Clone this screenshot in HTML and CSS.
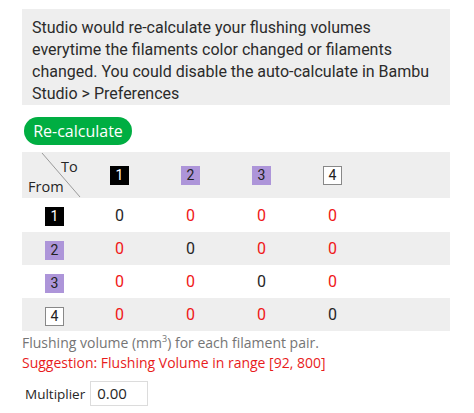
FILE: index.html
```html
<!DOCTYPE html>
<html>
<head>
<meta charset="utf-8">
<link rel="stylesheet" href="styles.css">
</head>
<body>
<div class="page">
  <div class="notice">Studio would re-calculate your flushing volumes everytime the filaments color changed or filaments changed. You could disable the auto-calculate in Bambu Studio &gt; Preferences</div>
  <div class="btn">Re-calculate</div>
  <div class="table">
    <div class="row head">
      <div class="corner">
        <svg class="diag" width="62" height="46" viewBox="0 0 62 46"><line x1="20" y1="1" x2="58" y2="45" stroke="#9a9a9a" stroke-width="1"/></svg>
        <span class="to">To</span>
        <span class="from">From</span>
      </div>
      <div class="cell"><span class="badge black">1</span></div>
      <div class="cell"><span class="badge purple">2</span></div>
      <div class="cell"><span class="badge purple">3</span></div>
      <div class="cell"><span class="badge white">4</span></div>
    </div>
    <div class="row">
      <div class="rowhead"><span class="badge black">1</span></div>
      <div class="cell">0</div><div class="cell red">0</div><div class="cell red">0</div><div class="cell red">0</div>
    </div>
    <div class="row grey">
      <div class="rowhead"><span class="badge purple">2</span></div>
      <div class="cell red">0</div><div class="cell">0</div><div class="cell red">0</div><div class="cell red">0</div>
    </div>
    <div class="row">
      <div class="rowhead"><span class="badge purple">3</span></div>
      <div class="cell red">0</div><div class="cell red">0</div><div class="cell">0</div><div class="cell red">0</div>
    </div>
    <div class="row grey">
      <div class="rowhead"><span class="badge white">4</span></div>
      <div class="cell red">0</div><div class="cell red">0</div><div class="cell red">0</div><div class="cell">0</div>
    </div>
  </div>
  <div class="info">Flushing volume (mm<sup>3</sup>) for each filament pair.</div>
  <div class="suggest">Suggestion: Flushing Volume in range [92, 800]</div>
  <div class="mult">
    <span>Multiplier</span>
    <div class="input">0.00</div>
  </div>
  <div class="hint">The multiplier should be in range [0.50, 2.50].</div>
</div>
</body>
</html>
```
FILE: styles.css
```css
html, body { margin: 0; padding: 0; background: #fff; overflow: hidden; }
body { width: 474px; height: 413px; }
.page { padding: 9px 24px 0 22px; font-family: "Open Sans", "Noto Sans", sans-serif; color: #262626; }
.notice {
  background: #eeeeee;
  padding: 8px 10px 0 10px;
  height: 88px;
  font-family: Roboto, "Noto Sans", sans-serif;
  font-size: 16px;
  line-height: 22px;
  color: #2b2b2b;
}
.btn {
  margin-top: 12px;
  margin-left: 2px;
  width: 108px;
  height: 28px;
  border-radius: 14px;
  background: #00ae42;
  color: #fff;
  font-size: 16px;
  line-height: 28px;
  text-align: center;
}
.table { margin-top: 7px; }
.row {
  display: grid;
  grid-template-columns: 62px 71px 71px 71px 71px 1fr;
  height: 33px;
  align-items: center;
}
.row.head { height: 46px; background: #eeeeee; }
.row.grey { background: #eeeeee; }
.row:nth-child(2) { height: 34px; }
.corner { position: relative; height: 46px; }
.diag { position: absolute; left: 0; top: 0; }
.to { position: absolute; left: 39px; top: 5px; font-size: 14.5px; }
.from { position: absolute; left: 6px; top: 25px; font-size: 14.5px; }
.cell { text-align: center; font-size: 16px; font-family: Roboto, "Noto Sans", sans-serif; }
.rowhead { text-align: center; padding-left: 3px; }
.red { color: #f01818; }
.badge {
  display: inline-block;
  width: 19px;
  height: 19px;
  line-height: 19px;
  text-align: center;
  font-size: 14px;
  font-family: Roboto, "Noto Sans", sans-serif;
  box-sizing: border-box;
  vertical-align: middle;
}
.badge.black { background: #000; color: #fff; }
.badge.purple { background: #ad95d9; color: #222; }
.badge.white { background: #fff; color: #222; border: 1px solid #888; line-height: 17px; }
.info { margin-top: 2px; font-size: 14px; line-height: 20px; color: #757575; }
.info sup { font-size: 9px; line-height: 0; }
.suggest { font-size: 14px; line-height: 20px; color: #e81c1c; }
.mult { display: flex; align-items: center; gap: 5px; margin-top: 8px; margin-left: 3px; font-size: 13.5px; }
.input {
  width: 58px;
  height: 25px;
  box-sizing: border-box;
  border: 1px solid #dcdcdc;
  padding-left: 6px;
  line-height: 23px;
  font-size: 15px;
}
.hint { margin-top: 4px; font-size: 14px; color: #757575; }
```
